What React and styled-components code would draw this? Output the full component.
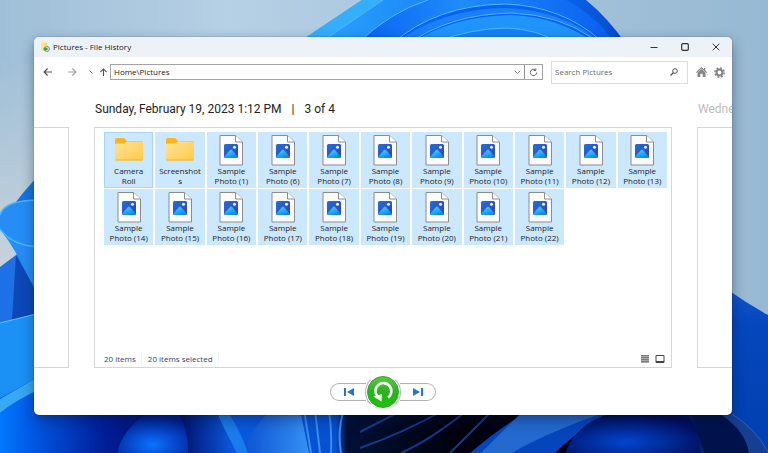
import React, { useState } from 'react';
import styled, { createGlobalStyle } from 'styled-components';

const GlobalStyle = createGlobalStyle`
  *, *::before, *::after {
    box-sizing: border-box;
  }

  body {
    margin: 0;
    background: #a6c5dc;
    font-family: 'Open Sans', 'Noto Sans', sans-serif;
    font-size: 8px;
    color: #222;
  }

  button, input {
    font-family: inherit;
    font-size: inherit;
    color: inherit;
    margin: 0;
  }
`;

const Desktop = styled.div`
  min-height: 100vh;
  padding: 37px 36px 38px 34px;
  display: flex;
  position: relative;
  overflow: hidden;
`;

const WallpaperSvg = styled.svg`
  position: absolute;
  inset: 0;
  width: 100%;
  height: 100%;
`;

const Window = styled.main`
  flex: 1;
  min-width: 0;
  display: flex;
  flex-direction: column;
  background: #fff;
  border-radius: 5px;
  overflow: hidden;
  position: relative;
  box-shadow: 0 0 1px rgba(0, 0, 0, 0.7), 0 5px 14px rgba(0, 20, 50, 0.4);
`;

const TitleBar = styled.header`
  height: 20px;
  display: flex;
  align-items: center;
  background: #edf2f8;
  padding: 0 1px 0 7px;
`;

const Title = styled.h1`
  flex: 1;
  margin: 0 0 0 3px;
  padding-bottom: 2px;
  font-size: 8px;
  font-weight: 400;
`;

const IconButton = styled.button`
  display: flex;
  align-items: center;
  justify-content: center;
  flex: none;
  width: ${(props) => props.$width || 20}px;
  height: 20px;
  padding: 0;
  border: none;
  background: none;

  &:hover {
    background: #e2e9f0;
  }
`;

const Toolbar = styled.nav`
  height: 30px;
  display: flex;
  align-items: center;
  padding: 0 4px 0 2px;
`;

const AddressBar = styled.div`
  flex: 1;
  height: 16px;
  display: flex;
  margin-left: 1px;
  border: 1px solid #a3a3a3;
`;

const TextInput = styled.input`
  flex: 1;
  min-width: 0;
  padding: 0 3px 2px;
  border: none;
  outline: none;
  background: none;

  &::placeholder {
    color: #6b6b6b;
    opacity: 1;
  }
`;

const BarButton = styled.button`
  display: flex;
  align-items: center;
  justify-content: center;
  width: ${(props) => props.$width}px;
  padding: 0;
  border: none;
  border-left: ${(props) => (props.$divided ? '1px solid #8f8f8f' : 'none')};
  background: none;
`;

const SearchBox = styled.div`
  width: 137px;
  height: 23px;
  display: flex;
  align-items: center;
  margin: 0 4px 0 8px;
  border: 1px solid #dcdcdc;
`;

const Versions = styled.div`
  flex: 1;
  display: grid;
  grid-template-columns: 35px minmax(0, 1fr) 35px;
  grid-template-rows: 40px 1fr;
  column-gap: 25px;
`;

const VersionTitle = styled.h2`
  display: flex;
  gap: 10px;
  margin: 0;
  padding: 14px 0 0 1px;
  font-family: Roboto, 'Open Sans', sans-serif;
  font-size: 12px;
  line-height: 16px;
  font-weight: 400;
  white-space: nowrap;
  color: ${(props) => (props.$faded ? '#b9bdb9' : '#222')};
`;

const Panel = styled.section`
  display: flex;
  flex-direction: column;
  border: 1px solid #d5d7d7;
  border-left-width: ${(props) => (props.$cut === 'left' ? 0 : 1)}px;
  border-right-width: ${(props) => (props.$cut === 'right' ? 0 : 1)}px;
`;

const FileGrid = styled.div`
  flex: 1;
  display: grid;
  grid-template-columns: repeat(11, minmax(0, 1fr));
  grid-auto-rows: 56px;
  align-content: start;
  gap: 1px 2px;
  padding: 4px 4px 0 9px;
`;

const FileTile = styled.button`
  display: flex;
  flex-direction: column;
  align-items: center;
  padding: 2px 0 0;
  border: 1px solid ${(props) => (props.$focused ? '#a9d5fa' : '#cce8ff')};
  background: ${(props) => (props.$selected ? '#cce8ff' : 'transparent')};
  line-height: 10px;
  text-align: center;
`;

const TileArt = styled.svg`
  width: 30px;
  height: 31px;
  flex: none;
`;

const FileName = styled.span`
  max-width: 42px;
  overflow-wrap: anywhere;
`;

const StatusBar = styled.footer`
  height: 17px;
  display: flex;
  align-items: center;
  padding: 0 5px 0 9px;
  color: #33446a;
`;

const StatusText = styled.span`
  padding-right: 5px;
  margin-right: 6px;
  border-right: 1px solid #eef2f6;
`;

const StatusViews = styled.div`
  display: flex;
  gap: 3px;
  margin-left: auto;
`;

const ViewButton = styled.button`
  width: 12px;
  height: 12px;
  display: flex;
  padding: 1px;
  border: none;
  background: none;
`;

const Controls = styled.div`
  height: 47px;
  display: flex;
  align-items: center;
  justify-content: center;
`;

const StepButton = styled.button`
  width: 36px;
  height: 18px;
  display: flex;
  align-items: center;
  justify-content: center;
  padding: 0;
  border: 1px solid #b2b2b2;
  border-radius: ${(props) => (props.$side === 'left' ? '9px 0 0 9px' : '0 9px 9px 0')};
  border-${(props) => (props.$side === 'left' ? 'right' : 'left')}: none;
  background: #fff;
`;

const RestoreButton = styled.button`
  width: 36px;
  height: 36px;
  display: flex;
  flex: none;
  padding: 0;
  margin: 0 -1px;
  border: 1px solid #b2b2b2;
  border-color: transparent #b2b2b2;
  border-radius: 50%;
  background: #fff;
  z-index: 1;
`;

const Wallpaper = () => (
  <WallpaperSvg viewBox="0 0 768 453" preserveAspectRatio="none" aria-hidden="true">
    <defs>
      <linearGradient id="sky" x1="0" x2="1">
        <stop offset="0" stopColor="#9fbfd8" />
        <stop offset="0.3" stopColor="#b6d0e5" />
        <stop offset="0.6" stopColor="#a7c5dc" />
        <stop offset="1" stopColor="#98b9d3" />
      </linearGradient>
      <linearGradient id="haze" x1="0" y1="0" x2="0" y2="1">
        <stop offset="0.2" stopColor="#c6d2da" stopOpacity="0" />
        <stop offset="0.9" stopColor="#c6d2da" />
      </linearGradient>
      <linearGradient id="bloom" x1="0" x2="1">
        <stop offset="0" stopColor="#2ea9fb" />
        <stop offset="0.35" stopColor="#1e8cf8" />
        <stop offset="0.8" stopColor="#0a66f0" />
        <stop offset="1" stopColor="#0548c8" />
      </linearGradient>
      <linearGradient id="fold" x1="0" x2="1">
        <stop offset="0" stopColor="#0a62f2" />
        <stop offset="0.4" stopColor="#1f8cfb" />
        <stop offset="1" stopColor="#0a5ef0" />
      </linearGradient>
      <linearGradient id="floor" x1="0" x2="1">
        <stop offset="0" stopColor="#0078ff" />
        <stop offset="0.05" stopColor="#0055e0" />
        <stop offset="0.14" stopColor="#001f9a" />
        <stop offset="0.24" stopColor="#000a60" />
        <stop offset="0.32" stopColor="#0a5ade" />
        <stop offset="0.46" stopColor="#0750cf" />
        <stop offset="0.475" stopColor="#001036" />
        <stop offset="0.62" stopColor="#00020f" />
        <stop offset="0.9" stopColor="#000318" />
        <stop offset="1" stopColor="#0038a4" />
      </linearGradient>
      <radialGradient id="glow" cx="0.5" cy="0.8" r="0.7">
        <stop offset="0" stopColor="#0a72ff" />
        <stop offset="1" stopColor="#001c90" />
      </radialGradient>
      <radialGradient id="orb" cx="0.45" cy="0.75" r="0.65">
        <stop offset="0" stopColor="#0046cf" />
        <stop offset="1" stopColor="#000b58" />
      </radialGradient>
      <linearGradient id="blade" x1="0" x2="1">
        <stop offset="0" stopColor="#0a4fd0" />
        <stop offset="1" stopColor="#3690f5" />
      </linearGradient>
      <linearGradient id="side" x1="0" y1="0" x2="0" y2="1">
        <stop offset="0" stopColor="#1257cc" />
        <stop offset="0.2" stopColor="#0647bd" />
        <stop offset="1" stopColor="#003fb0" />
      </linearGradient>
    </defs>
    <rect width="768" height="453" fill="url(#sky)" />
    <rect width="60" height="290" fill="url(#haze)" />
    {/* bloom behind the top edge */}
    <path d="M296 44 362 0H586Q608 18 626 44Z" fill="url(#bloom)" />
    <path d="M296 44 362 0H383L318 44Z" fill="#35aefb" />
    <path d="M357 44Q390 12 428 0H566Q596 16 616 44Z" fill="url(#fold)" />
    <path d="M392 44Q436 5 505 4Q568 6 608 44Z" fill="#0a62f2" />
    <path d="M394 44Q440 9 505 8Q565 10 602 44Z" fill="#1a80fa" />
    <path d="M408 44Q450 14 512 13Q566 15 600 44Z" fill="#0a62f2" />
    <path d="M410 44Q452 16 512 15Q560 17 596 44Z" fill="#1f95fb" />
    <path d="M430 44Q470 28 508 28Q536 29 562 44Z" fill="#1583f4" />
    <g fill="none" stroke="#4fb9ff" strokeWidth="1">
      <path d="M318 44 383 0M357 44Q390 12 428 0" />
      <path d="M392 44Q436 5 505 4Q562 6 600 40" />
      <path d="M408 44Q450 14 512 13Q560 15 592 38" />
      <path d="M430 44Q470 28 508 28Q536 29 562 44" />
    </g>
    {/* left petals */}
    <path d="M0 267 20 252 40 290V340H0Z" fill="#1d70e6" />
    <path d="M16 202Q24 191 40 174V205Z" fill="#1673e4" />
    <path d="M0 215Q4 200 40 200V300L34 290Q20 255 0 229Z" fill="#268df6" />
    <path d="M16 255 40 298V320H12Z" fill="#0a3fae" opacity="0.8" />
    <path d="M0 323 40 313V385L0 405Z" fill="#1b91f5" />
    <path d="M0 215Q4 200 40 200M0 229Q12 246 40 247" fill="none" stroke="#43b8ff" strokeWidth="1.5" />
    <path d="M0 323 40 313" stroke="#63c5ff" strokeWidth="1" />
    <path d="M0 398 40 376V453H0Z" fill="#0760e8" />
    <path d="M0 399 40 376V389Q16 400 0 413Z" fill="#37a8f4" />
    {/* lower edge */}
    <path d="M0 414Q18 397 40 393V410H730V453H0Z" fill="url(#floor)" />
    <path d="M117 453Q122 430 148 412H178Q189 430 188 453Z" fill="url(#glow)" />
    <path d="M240 453Q253 425 272 410H300L309 453Z" fill="url(#blade)" />
    <path d="M216 410Q222 425 237 453H248Q238 425 226 410Z" fill="#1a7bec" />
    <path d="M304 410 311 453M315 410 320 453M329 410Q332 430 331 453M344 410Q337 430 341 453" fill="none" stroke="#388ef2" strokeWidth="2" />
    <path d="M360 448Q403 433 444 410M360 432 397 413M401 453Q430 440 465 412M450 453 493 410" fill="none" stroke="#123b8c" strokeWidth="2" />
    <path d="M470 453Q525 407 540 410H630Q590 418 555 453Z" fill="#0545bc" />
    <path d="M481 453 520 414H600Q542 435 512 453Z" fill="#2369cf" />
    <path d="M565 453Q579 417 625 410H682Q701 426 700 453Z" fill="url(#orb)" />
    {/* right petals */}
    <path d="M728 290Q748 304 768 315V453H728Z" fill="url(#side)" />
    <path d="M728 413Q755 426 768 453H704L690 410Z" fill="#00124c" />
    <path d="M732 414Q758 430 768 453H749Q745 430 720 414Z" fill="#163e91" />
    <path d="M732 414Q756 429 768 452" fill="none" stroke="#2864c8" />
  </WallpaperSvg>
);

const AppIcon = () => (
  <svg width="9" height="10" viewBox="0 0 18 20" aria-hidden="true">
    <path d="M1 1h10l2 3v13H1z" fill="#ffd869" />
    <path d="M1 1h4l2 2v13H1z" fill="#ffe69a" />
    <circle cx="12" cy="14" r="5" fill="#d5e2df" stroke="#879b93" strokeWidth="2" />
    <path d="m4 14 5-5v3h4v4H9v3z" fill="#27ae3e" />
  </svg>
);

const Arrow = ({ rotate = 0, color = '#555', size = 10 }) => (
  <svg width={size} height={size} viewBox="0 0 10 10" aria-hidden="true">
    <path
      d="M9 5H1.2M4.6 1.5 1.1 5l3.5 3.5"
      fill="none"
      stroke={color}
      strokeWidth="1.2"
      transform={`rotate(${rotate} 5 5)`}
    />
  </svg>
);

const FolderArt = () => (
  <TileArt viewBox="0 0 30 31" aria-hidden="true">
    <defs>
      <linearGradient id="folder" x1="0" y1="0" x2="1" y2="1">
        <stop offset="0" stopColor="#ffe39a" />
        <stop offset="1" stopColor="#ffca45" />
      </linearGradient>
    </defs>
    <path d="M1 5q0-2 2-2h7l3 3h14q2 0 2 2v6H1z" fill="#f8b51d" />
    <path d="M1 10q0-1.500 1.500-1.500h8L13 6.500h14q2 0 2 2V24q0 1.500-1.500 1.500h-25Q1 25.500 1 24z" fill="url(#folder)" />
    <path d="M1.500 25h27" stroke="#e9b33b" strokeWidth="1" />
  </TileArt>
);

const PhotoArt = () => (
  <TileArt viewBox="0 0 30 31" aria-hidden="true">
    <defs>
      <linearGradient id="photo" x1="0" y1="0" x2="1" y2="1">
        <stop offset="0" stopColor="#1d72d8" />
        <stop offset="1" stopColor="#3d3ab4" />
      </linearGradient>
      <linearGradient id="hill" x1="0" y1="0" x2="0.6" y2="1">
        <stop offset="0" stopColor="#4ddcfb" />
        <stop offset="1" stopColor="#0b86e8" />
      </linearGradient>
    </defs>
    <path d="M4 .5h15.500L26.500 7v23H4z" fill="#fbfbfb" stroke="#8c8c8c" />
    <path d="M19.500.5V7h7" fill="#fff" stroke="#8c8c8c" />
    <rect x="8" y="9" width="14" height="14" rx="1.500" fill="url(#photo)" />
    <path d="m8.300 21.500 5.700-6.500q1-1 2 0l5.700 6.500q0 1.500-1.200 1.500h-11q-1.200 0-1.200-1.500z" fill="url(#hill)" />
    <circle cx="18.500" cy="12.300" r="1.500" fill="#e6f7ff" />
  </TileArt>
);

const StepIcon = ({ flip }) => (
  <svg width="12" height="10" viewBox="0 0 12 10" aria-hidden="true">
    <g fill="#1f78c8" transform={flip ? 'matrix(-1 0 0 1 12 0)' : undefined}>
      <path d="M1 1h2v8H1zM11 1v8L4 5z" />
    </g>
  </svg>
);

const RestoreIcon = () => (
  <svg width="34" height="34" viewBox="0 0 34 34" aria-hidden="true">
    <defs>
      <linearGradient id="green" x1="0" y1="0" x2="0" y2="1">
        <stop offset="0" stopColor="#5fc64a" />
        <stop offset="0.5" stopColor="#28b41d" />
        <stop offset="1" stopColor="#18c505" />
      </linearGradient>
    </defs>
    <circle cx="17" cy="17" r="15.500" fill="url(#green)" stroke="#36a52b" />
    <path d="M22 22.600A8 8 0 1 0 11.500 21.500" fill="none" stroke="#fff" strokeWidth="2.600" />
    <path d="m7.500 21.500 8.500-2.500-.5 7.500z" fill="#fff" />
  </svg>
);

const files = [
  { name: 'Camera Roll', folder: true },
  { name: 'Screenshots', folder: true },
  { name: 'Sample Photo (1)' },
  ...Array.from({ length: 17 }, (_, i) => ({ name: `Sample Photo (${i + 6})` })),
];

const App = () => {
  const [path, setPath] = useState('Home\\Pictures');
  const [query, setQuery] = useState('');

  return (
    <>
      <GlobalStyle />
      <Desktop>
        <Wallpaper />
        <Window>
          <TitleBar>
            <AppIcon />
            <Title>Pictures - File History</Title>
            <IconButton $width={30} aria-label="Minimize">
              <svg width="8" height="8" viewBox="0 0 8 8"><path d="M.5 4.500h7" stroke="#333" /></svg>
            </IconButton>
            <IconButton $width={31} aria-label="Maximize">
              <svg width="8" height="8" viewBox="0 0 8 8">
                <rect x=".7" y=".7" width="6.600" height="6.600" rx="1" fill="none" stroke="#333" strokeWidth="1.200" />
              </svg>
            </IconButton>
            <IconButton $width={31} aria-label="Close">
              <svg width="8" height="8" viewBox="0 0 8 8"><path d="m.7.7 6.600 6.600m0-6.600L.7 7.300" stroke="#333" /></svg>
            </IconButton>
          </TitleBar>

          <Toolbar>
            <IconButton $width={24} aria-label="Back"><Arrow /></IconButton>
            <IconButton $width={24} aria-label="Forward"><Arrow rotate={180} color="#a5a5a5" /></IconButton>
            <IconButton $width={14} aria-label="Recent locations">
              <svg width="4" height="4" viewBox="0 0 4 4"><path d="m.5.5 3 3" stroke="#777" /></svg>
            </IconButton>
            <IconButton $width={11} aria-label="Up"><Arrow rotate={90} size={9} /></IconButton>
            <AddressBar>
              <TextInput
                aria-label="Address"
                value={path}
                onChange={(e) => setPath(e.target.value)}
              />
              <BarButton $width={13} aria-label="Previous locations">
                <svg width="7" height="5" viewBox="0 0 7 5"><path d="m.8.8 2.700 2.700L6.200.8" fill="none" stroke="#777" /></svg>
              </BarButton>
              <BarButton $width={18} $divided aria-label="Refresh">
                <svg width="9" height="9" viewBox="0 0 9 9">
                  <path d="M6.500 1.900A3.200 3.200 0 1 0 7.700 4.500M6.800.3v2.200H4.500" fill="none" stroke="#666" />
                </svg>
              </BarButton>
            </AddressBar>
            <SearchBox>
              <TextInput
                aria-label="Search Pictures"
                placeholder="Search Pictures"
                value={query}
                onChange={(e) => setQuery(e.target.value)}
              />
              <IconButton $width={26} aria-label="Search">
                <svg width="8" height="8" viewBox="0 0 8 8" fill="none" stroke="#555">
                  <circle cx="5" cy="3" r="2.300" />
                  <path d="M3.300 4.700.5 7.500" strokeWidth="1.300" />
                </svg>
              </IconButton>
            </SearchBox>
            <IconButton $width={18} aria-label="Home">
              <svg width="11" height="10" viewBox="0 0 11 10" fill="#858585">
                <path d="M5.500 0 8 2.300V1h1.300v2.500L11 5.200l-.8.7L5.500 1.600.8 5.900 0 5.200z" />
                <path d="m5.500 2 4 3.700V10H6.700V6.800H4.300V10H1.500V5.700z" />
              </svg>
            </IconButton>
            <IconButton $width={18} aria-label="Options">
              <svg width="11" height="11" viewBox="0 0 11 11" fill="none" stroke="#858585">
                <circle cx="5.500" cy="5.500" r="2.900" strokeWidth="2" />
                <circle cx="5.500" cy="5.500" r="4.600" strokeWidth="1.600" strokeDasharray="1.900 1.710" />
              </svg>
            </IconButton>
          </Toolbar>

          <Versions>
            <span />
            <VersionTitle>
              <span>Sunday, February 19, 2023 1:12 PM</span>
              <span>|</span>
              <span>3 of 4</span>
            </VersionTitle>
            <VersionTitle $faded>Wednesday</VersionTitle>
            <Panel $cut="left" aria-label="Previous version" />
            <Panel aria-label="Current version">
              <FileGrid>
                {files.map((file, i) => (
                  <FileTile key={file.name} $selected $focused={i === 0}>
                    {file.folder ? <FolderArt /> : <PhotoArt />}
                    <FileName>{file.name}</FileName>
                  </FileTile>
                ))}
              </FileGrid>
              <StatusBar>
                <StatusText>20 items</StatusText>
                <StatusText>20 items selected</StatusText>
                <StatusViews>
                  <ViewButton aria-label="Details view">
                    <svg width="10" height="10" viewBox="0 0 10 10">
                      <path d="M1 1h8v8H1z" fill="#aaa" />
                      <path d="M1 1.500h8M1 3.500h8M1 5.500h8M1 7.500h8" stroke="#7c7c7c" />
                    </svg>
                  </ViewButton>
                  <ViewButton aria-label="Large icons view">
                    <svg width="10" height="10" viewBox="0 0 10 10">
                      <path d="M1 1.500h8v7H1z" fill="#fff" stroke="#444" />
                      <path d="M1 8h8" stroke="#444" strokeWidth="2" />
                    </svg>
                  </ViewButton>
                </StatusViews>
              </StatusBar>
            </Panel>
            <Panel $cut="right" aria-label="Next version" />
          </Versions>

          <Controls>
            <StepButton $side="left" aria-label="Previous version"><StepIcon /></StepButton>
            <RestoreButton aria-label="Restore to original location"><RestoreIcon /></RestoreButton>
            <StepButton $side="right" aria-label="Next version"><StepIcon flip /></StepButton>
          </Controls>
        </Window>
      </Desktop>
    </>
  );
};

export default App;
